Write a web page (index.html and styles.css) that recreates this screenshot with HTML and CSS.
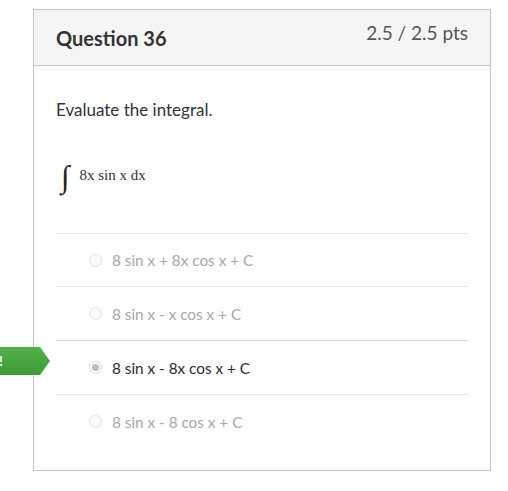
FILE: index.html
```html
<!DOCTYPE html>
<html>
<head>
<meta charset="utf-8">
<link rel="stylesheet" href="styles.css">
</head>
<body>
<div class="card">
  <div class="header">
    <div class="title">Question 36</div>
    <div class="pts">2.5 / 2.5 pts</div>
  </div>
  <div class="body">
    <p class="prompt">Evaluate the integral.</p>
    <div class="formula"><span class="int">∫</span><span class="expr">8x sin x dx</span></div>
    <div class="answers">
      <div class="row"><span class="radio"></span><span class="label">8 sin x + 8x cos x + C</span></div>
      <div class="row"><span class="radio"></span><span class="label">8 sin x - x cos x + C</span></div>
      <div class="row selected">
        <div class="tag">Correct!</div>
        <span class="radio checked"></span><span class="label">8 sin x - 8x cos x + C</span>
      </div>
      <div class="row"><span class="radio"></span><span class="label">8 sin x - 8 cos x + C</span></div>
    </div>
  </div>
</div>
</body>
</html>
```
FILE: styles.css
```css
html, body {
  margin: 0;
  padding: 0;
  background: #fff;
}
body {
  font-family: Lato, "Liberation Sans", sans-serif;
  color: #2d3b45;
}
.card {
  margin: 9px 0 0 33px;
  width: 458px;
  box-sizing: border-box;
  border: 1px solid #c4c4c4;
}
.header {
  height: 56px;
  box-sizing: border-box;
  background: #f5f5f5;
  border-bottom: 1px solid #c4c4c4;
  padding: 0 22px;
  display: flex;
  justify-content: space-between;
  align-items: flex-start;
}
.title {
  font-weight: 700;
  font-size: 20px;
  line-height: 24px;
  margin-top: 16px;
  color: #333;
}
.pts {
  font-size: 19px;
  line-height: 22px;
  margin-top: 12px;
  color: #555;
}
.body {
  padding: 0 22px 22px;
}
.prompt {
  margin: 32px 0 0;
  font-size: 17px;
  line-height: 24px;
  color: #333;
}
.formula {
  display: flex;
  align-items: flex-start;
  margin-top: 40px;
  height: 59px;
  padding-left: 5px;
  font-family: "Liberation Serif", "DejaVu Serif", serif;
  color: #222;
}
.int {
  font-size: 31px;
  line-height: 34px;
  margin-top: -2px;
}
.expr {
  font-size: 15px;
  line-height: 18px;
  margin-left: 10px;
  margin-top: 4px;
  color: #333;
}
.answers {
  margin-top: 12px;
}
.row {
  position: relative;
  height: 53px;
  border-top: 1px solid #e6e6e6;
  display: flex;
  align-items: center;
  padding-left: 33px;
  color: #a8a8a8;
}
.row:first-child {
  height: 52px;
}
.row.selected {
  color: #2d2d2d;
  border-top-color: #d6d6d6;
}
.radio {
  width: 11px;
  height: 11px;
  border-radius: 50%;
  border: 1px solid #e2e2e2;
  background: #fafafa;
  margin-right: 10px;
  display: flex;
  align-items: center;
  justify-content: center;
}
.radio.checked {
  border-color: #d8d8d8;
}
.radio.checked::after {
  content: "";
  width: 7px;
  height: 7px;
  border-radius: 50%;
  background: #bcbcbc;
}
.label {
  font-size: 15.3px;
  line-height: 20px;
}
.tag {
  position: absolute;
  left: -107px;
  top: 6px;
  height: 28px;
  width: 54px;
  padding-right: 47px;
  text-align: right;
  white-space: nowrap;
  background: linear-gradient(#52b04a, #3e9a38);
  color: #fff;
  font-weight: 700;
  font-size: 14px;
  line-height: 28px;
  clip-path: polygon(0 0, 91px 0, 101px 14px, 91px 28px, 0 28px);
}
```
